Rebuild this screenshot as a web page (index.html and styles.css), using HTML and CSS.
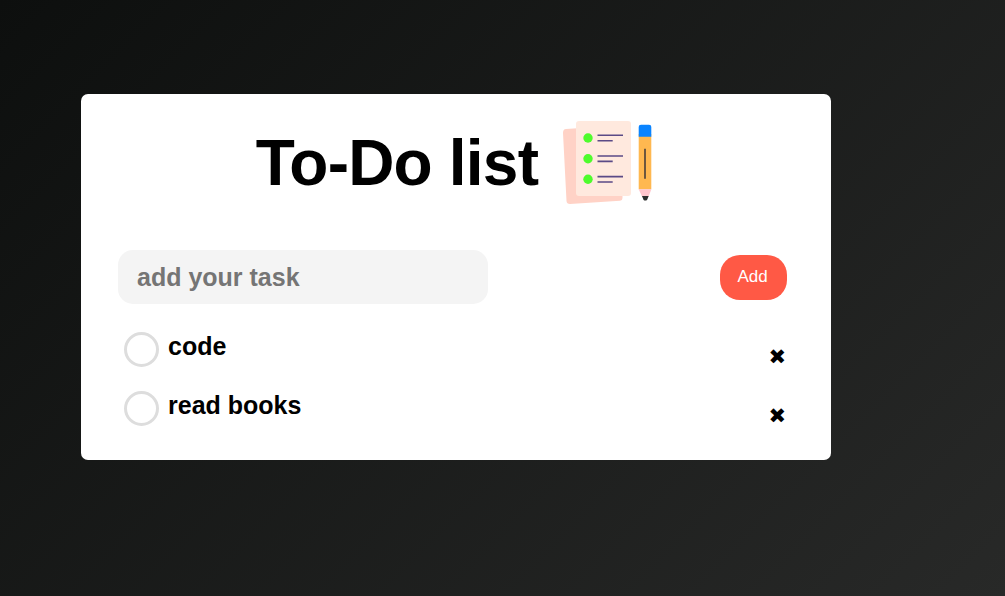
FILE: index.html
```html
<!DOCTYPE html>
<html lang="en">

<head>
    <meta charset="UTF-8">
    <meta name="viewport" content="width=device-width, initial-scale=1.0">
    <title>To-Do list</title>
    <link rel="stylesheet" href="styles.css">
</head>

<body>
    <div class="container">
        <div class="todo-app">
            <!-- Title -->
            <h1 class="title">
                <span>To-Do list</span>
                <svg class="title-icon" width="100" height="90" viewBox="0 0 100 90">
                    <path d="M10 11 L40 9 L66 9 L66.500 80 Q66.500 82.500 64 82.700 L14 86 Q10.700 86 10.500 83 L7 15 Q7 11 10 11 Z" fill="#ffd2c6" />
                    <rect x="20" y="3" width="55" height="75" rx="3" fill="#ffe9de" />
                    <circle cx="32" cy="20" r="4.700" fill="#4efc2c" />
                    <circle cx="32" cy="40.700" r="4.700" fill="#4efc2c" />
                    <circle cx="32" cy="61.300" r="4.700" fill="#4efc2c" />
                    <g stroke="#5b4a86" stroke-width="1.600">
                        <path d="M41.500 17.300 H67 M41.500 22.700 H56.700" />
                        <path d="M41.500 38 H67 M41.500 43.400 H56.700" />
                        <path d="M41.500 58.600 H67 M41.500 64 H56.700" />
                    </g>
                    <path d="M82.700 16 H95.300 V71.300 H82.700 Z" fill="#ffb850" />
                    <path d="M82.700 9 Q82.700 6.700 85 6.700 H93 Q95.300 6.700 95.300 9 V18.700 H82.700 Z" fill="#0a84ff" />
                    <path d="M82.700 71.300 H95.300 L92.700 78.500 H86 Z" fill="#ffc4cc" />
                    <path d="M86 78 H92.700 L91 82 Q89.300 83 87.600 82 Z" fill="#2b2b2b" />
                    <path d="M89 30.700 V60.700" stroke="#4a3f3a" stroke-width="1.600" />
                </svg>
            </h1>

            <!-- Add Task -->
            <div class="add-row">
                <input type="text" class="task-input" placeholder="add your task">
                <button class="btn-add">Add</button>
            </div>

            <!-- Task List -->
            <ul class="task-list">
                <li class="task-item">
                    <span class="task-check"></span>
                    <span class="task-name">code</span>
                    <span class="task-remove">&#10006;</span>
                </li>
                <li class="task-item">
                    <span class="task-check"></span>
                    <span class="task-name">read books</span>
                    <span class="task-remove">&#10006;</span>
                </li>
            </ul>
        </div>
    </div>
</body>

</html>
```

FILE: styles.css
```css
/* Base Styles */
* {
    box-sizing: border-box;
}

html,
body {
    height: 100%;
}

body {
    margin: 0;
    font-family: "Liberation Sans", Arial, sans-serif;
    color: #000;
    background: linear-gradient(135deg, #0d0f0e, #282928);
    overflow: hidden;
}

.container {
    padding: 94px 0 0 81px;
}

/* Card */
.todo-app {
    width: 750px;
    height: 366px;
    padding: 24px 37px 0;
    background-color: #fff;
    border-radius: 7px;
}

.title {
    display: flex;
    justify-content: center;
    align-items: center;
    gap: 18px;
    height: 90px;
    margin: 0 0 42px;
    font-size: 64px;
    font-weight: 700;
    letter-spacing: -0.8px;
    line-height: 90px;
}

/* Add Task */
.add-row {
    display: flex;
    justify-content: space-between;
    align-items: center;
    height: 54px;
    margin: 0 7px 20px 0;
}

.task-input {
    width: 370px;
    height: 54px;
    padding: 0 19px;
    border: none;
    border-radius: 15px;
    outline: none;
    background-color: #f4f4f4;
    font-family: inherit;
    font-size: 25px;
    font-weight: 700;
}

.btn-add {
    width: 67px;
    height: 45px;
    padding: 0 2px 0 0;
    border: none;
    border-radius: 20px;
    background-color: #ff5945;
    color: #fff;
    font-family: inherit;
    font-size: 17px;
}

/* Task List */
.task-list {
    margin: 0 7px 0 0;
    padding: 0;
    list-style: none;
}

.task-item {
    display: flex;
    height: 59px;
    padding: 8px 0 0 6px;
    font-size: 25px;
    font-weight: 700;
}

.task-check {
    width: 35px;
    height: 35px;
    margin-right: 9px;
    border: 3px solid #ddd;
    border-radius: 50%;
}

.task-name {
    line-height: 28px;
}

.task-remove {
    margin: 10px 1px 0 auto;
    font-family: "DejaVu Sans", sans-serif;
    font-size: 21px;
    line-height: 30px;
}
```
